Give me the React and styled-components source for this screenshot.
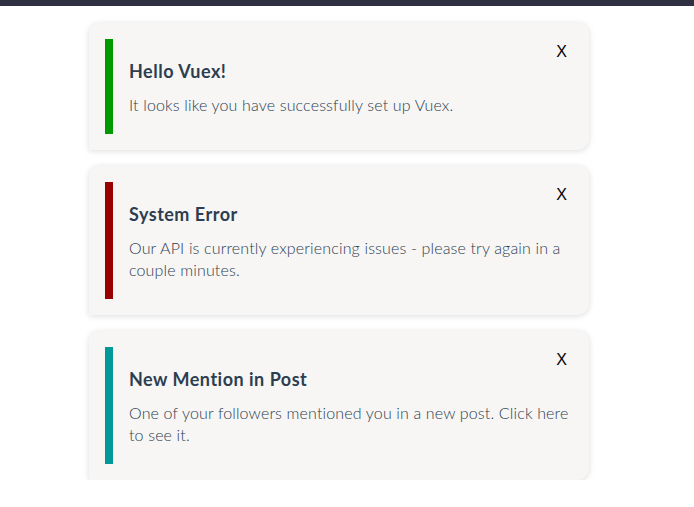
import React from 'react';
import styled, { createGlobalStyle } from 'styled-components';

const GlobalStyle = createGlobalStyle`
    body {
        margin: 0;
        background: #ffffff;
        font-family: Lato, "Noto Sans", sans-serif;
    }
`;

const TopBar = styled.div`
    height: 6px;
    background: #2f3142;
`;

const List = styled.div`
    display: flex;
    flex-direction: column;
    gap: 16px;
    width: 500px;
    padding: 17px 0 0 89px;
`;

const Card = styled.div`
    position: relative;
    padding: 16px;
    background: #f7f6f5;
    border-radius: 10px 10px 12px 0;
    box-shadow: 0 1px 6px rgba(0, 0, 0, 0.14);
`;

const Content = styled.div`
    border-left: 8px solid ${(p) => p.$color};
    padding: 21px 0 18px 16px;
`;

const Title = styled.h3`
    margin: 0 0 12px;
    font-size: 18px;
    line-height: 22px;
    font-weight: 700;
    letter-spacing: 0.5px;
    color: #2c3e50;
`;

const Message = styled.p`
    margin: 0;
    font-size: 16px;
    line-height: 22px;
    font-weight: 300;
    letter-spacing: 0.15px;
    color: #2c3e50;
`;

const CloseButton = styled.button`
    position: absolute;
    top: 17px;
    right: 16px;
    border: none;
    background: none;
    padding: 4px 6px;
    font-family: "Liberation Sans", Arial, sans-serif;
    font-size: 16px;
    line-height: 16px;
    color: #000;
    cursor: pointer;
`;

const notifications = [
    { id: 1, color: '#009900', title: 'Hello Vuex!', message: 'It looks like you have successfully set up Vuex.' },
    { id: 2, color: '#990000', title: 'System Error', message: 'Our API is currently experiencing issues - please try again in a couple minutes.' },
    { id: 3, color: '#009999', title: 'New Mention in Post', message: 'One of your followers mentioned you in a new post. Click here to see it.' },
];

export default function App() {
    return <>
        <GlobalStyle />
        <TopBar />
        <List>
            {notifications.map((n) => (
                <Card key={n.id}>
                    <Content $color={n.color}>
                        <Title>{n.title}</Title>
                        <Message>{n.message}</Message>
                    </Content>
                    <CloseButton>X</CloseButton>
                </Card>
            ))}
        </List>
    </>;
}
